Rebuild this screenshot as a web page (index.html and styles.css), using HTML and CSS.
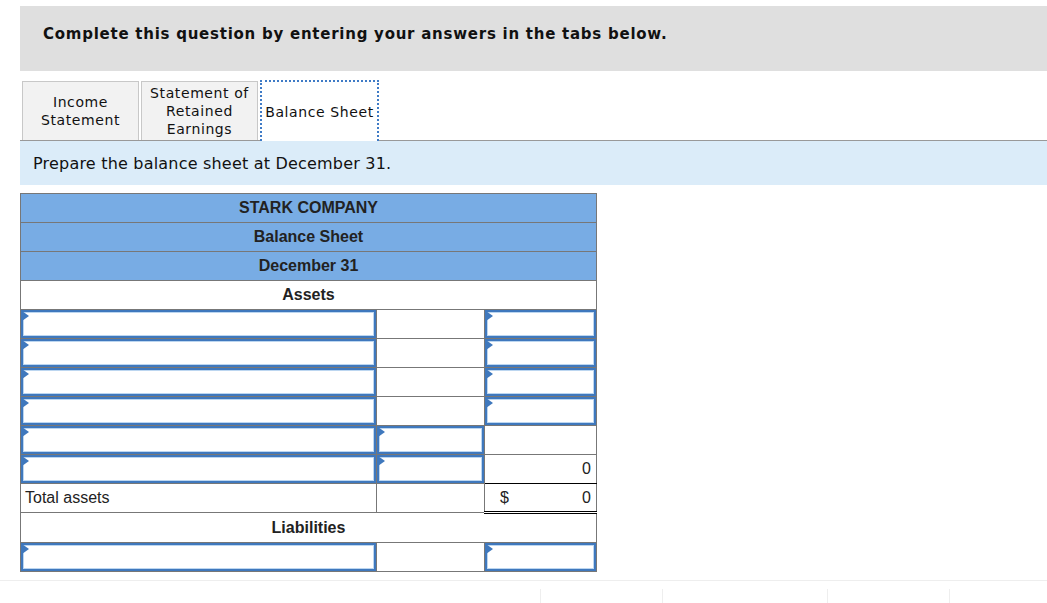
FILE: index.html
```html
<!DOCTYPE html>
<html>
<head>
<meta charset="utf-8">
<link rel="stylesheet" href="styles.css">
</head>
<body>
<div class="page">
  <div class="banner">Complete this question by entering your answers in the tabs below.</div>
  <div class="tabs">
    <div class="tab">Income<br>Statement</div>
    <div class="tab">Statement of<br>Retained<br>Earnings</div>
    <div class="tab active">Balance Sheet</div>
  </div>
  <div class="instr">Prepare the balance sheet at December 31.</div>
  <table class="bs">
    <colgroup><col class="c1"><col class="c2"><col class="c3"></colgroup>
    <tr class="hd"><td colspan="3">STARK COMPANY</td></tr>
    <tr class="hd"><td colspan="3">Balance Sheet</td></tr>
    <tr class="hd"><td colspan="3">December 31</td></tr>
    <tr class="sec"><td colspan="3">Assets</td></tr>
    <tr><td><div class="inp"></div></td><td></td><td><div class="inp"></div></td></tr>
    <tr><td><div class="inp"></div></td><td></td><td><div class="inp"></div></td></tr>
    <tr><td><div class="inp"></div></td><td></td><td><div class="inp"></div></td></tr>
    <tr><td><div class="inp"></div></td><td></td><td><div class="inp"></div></td></tr>
    <tr><td><div class="inp"></div></td><td><div class="inp"></div></td><td></td></tr>
    <tr><td><div class="inp"></div></td><td><div class="inp"></div></td><td class="num sub">0</td></tr>
    <tr class="totrow"><td class="lbl">Total assets</td><td></td><td class="num tot"><span class="cur">$</span><span>0</span></td></tr>
    <tr class="sec"><td colspan="3">Liabilities</td></tr>
    <tr><td><div class="inp"></div></td><td></td><td><div class="inp"></div></td></tr>
  </table>
</div>
<div class="footer">
  <div class="fc f0"></div>
  <div class="fc f1"></div>
  <div class="fc f2"></div>
  <div class="fc f3"></div>
  <div class="fc f4"></div>
</div>
</body>
</html>
```
FILE: styles.css
```css
body {
  margin: 0;
  background: #fff;
  font-family: "DejaVu Sans", Verdana, sans-serif;
  color: #111;
}
.page {
  padding: 6px 0 0 20px;
}
.banner {
  height: 65px;
  box-sizing: border-box;
  background: #dfdfdf;
  padding: 18px 0 0 23px;
  font-weight: bold;
  font-size: 15px;
  letter-spacing: 0.75px;
  line-height: 20px;
  color: #111;
}
.tabs {
  display: flex;
  gap: 2px;
  margin-top: 10px;
  padding-left: 2px;
  border-bottom: 1px solid #999;
  height: 59px;
}
.tab {
  width: 117px;
  box-sizing: border-box;
  height: 59px;
  border: 1px solid #c8c8c8;
  border-bottom: none;
  background: #f2f2f2;
  font-size: 14px;
  letter-spacing: 0.6px;
  line-height: 18px;
  text-align: center;
  display: flex;
  align-items: center;
  justify-content: center;
  color: #111;
}
.tab.active {
  width: 119px;
  background: #fff;
  height: 61px;
  margin-top: -1px;
  padding-top: 1px;
  border-color: #999;
  border-left: 2px dotted #3f7bc6;
  border-right: 2px dotted #3f7bc6;
  border-top: 2px dotted #3f7bc6;
  position: relative;
  z-index: 1;
}
.instr {
  height: 44px;
  box-sizing: border-box;
  background: #dbecf9;
  font-size: 16px;
  letter-spacing: 0.2px;
  line-height: 40px;
  padding: 3px 0 0 13px;
  color: #111;
}
.bs {
  margin-top: 8px;
  border-collapse: collapse;
  width: 576px;
  table-layout: fixed;
  font-family: "Liberation Sans", Arial, sans-serif;
  font-size: 16px;
  color: #222;
}
.c1 { width: 356px; }
.c2 { width: 108px; }
.c3 { width: 112px; }
.bs td {
  border: 1px solid #777;
  padding: 0;
  height: 28px;
}
.bs .totrow td {
  height: 27px;
}
.hd td {
  background: #78ace4;
  text-align: center;
  font-weight: bold;
}
.sec td {
  background: #fff;
  text-align: center;
  font-weight: bold;
}
.inp {
  position: relative;
  height: 28px;
  box-sizing: border-box;
  border: 2px solid #3f78bd;
  box-shadow: inset 0 0 0 1px #bcd6f0;
  background: #fff;
}
.inp::before {
  content: "";
  position: absolute;
  left: -1px;
  top: -1px;
  border-left: 7px solid #3f78bd;
  border-top: 5px solid transparent;
  border-bottom: 5px solid transparent;
}
.bs td.lbl {
  padding-left: 4px;
}
.bs td.num {
  text-align: right;
  padding-right: 5px;
}
.bs td.sub {
  border-bottom: 1px solid #000;
}
.bs td.tot {
  border-bottom: 3px double #000;
}
.tot .cur {
  float: left;
  padding-left: 15px;
}
.footer {
  margin-top: 8px;
  border-top: 1px solid #eee;
  display: flex;
  padding-top: 8px;
  height: 16px;
}
.fc {
  height: 16px;
}
.f0 { width: 540px; }
.f1 { width: 121px; border-left: 1px solid #eee; }
.f2 { width: 164px; border-left: 1px solid #eee; }
.f3 { width: 121px; border-left: 1px solid #eee; }
.f4 { flex: 1; border-left: 1px solid #eee; }
```
